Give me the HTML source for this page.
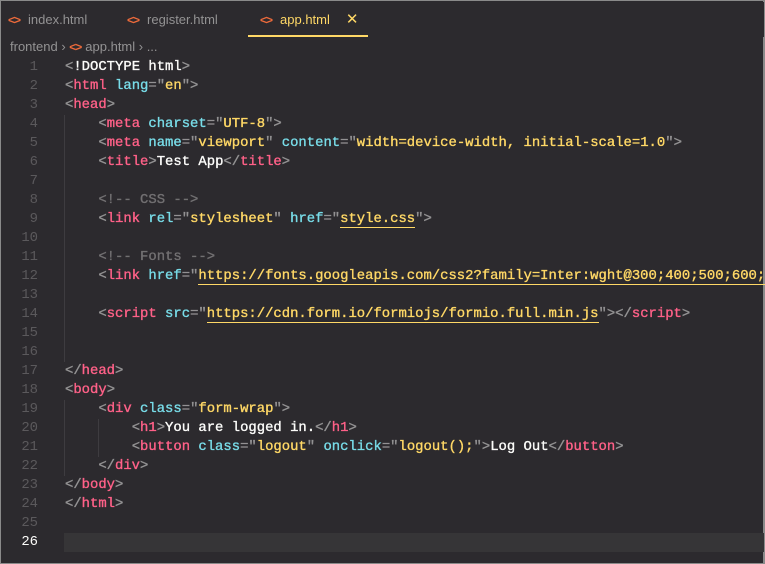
<!DOCTYPE html>
<html><head><style>
*{margin:0;padding:0;box-sizing:border-box}
body{width:765px;height:564px;overflow:hidden;background:#2c2a2e;font-family:"Liberation Sans",sans-serif;position:relative;border:1px solid #8a8a8a;border-right:2px solid #8a8a8a}
.tabs{position:absolute;left:1px;top:1px;width:762px;height:35px;background:#2c2a2e}
.tab{position:absolute;top:0;height:35px;line-height:35px;font-size:13px;color:#939293}
.ic{color:#ef6b3b;font-weight:bold;font-size:12px;margin-right:8px;letter-spacing:-1px}
.crumb{position:absolute;left:9px;top:38px;font-size:13px;color:#939293}
.code{position:absolute;left:0;top:57px;width:763px;font-family:"Liberation Mono",monospace;font-size:13.9px;-webkit-text-stroke:0.35px}
.ln{height:19px;line-height:19px;white-space:pre;position:relative}
.n{display:inline-block;width:37px;text-align:right;color:#5b595c;margin-right:27px;-webkit-text-stroke:0}
.p{color:#939293}.t{color:#ff6188}.a{color:#78dce8}.s{color:#ffd866}.w{color:#fcfcfa}.c{color:#727072}
.u{border-bottom:1px solid #ffd866}
.cur{background:#363537;position:absolute;left:63px;right:0;top:0;height:19px}
.g{position:absolute;width:1px;background:#3e3c40}
</style></head><body>
<div class="tabs">
<div class="tab" style="left:6px"><span class="ic">&lt;&gt;</span>index.html</div>
<div class="tab" style="left:125px"><span class="ic">&lt;&gt;</span>register.html</div>
<div class="tab" style="left:246px;width:120px;padding-left:12px;color:#ffd866;border-bottom:2px solid #ffd866"><span class="ic">&lt;&gt;</span>app.html<span style="margin-left:16px;color:#ffd866;font-size:15px">✕</span></div>
</div>
<div class="crumb">frontend › <span class="ic" style="margin-right:4px">&lt;&gt;</span>app.html › ...</div>
<div class="g" style="left:63px;top:114px;height:247px"></div>
<div class="g" style="left:63px;top:399px;height:76px"></div>
<div class="g" style="left:97px;top:418px;height:38px"></div>
<div class="code">
<div class="ln"><span class="n">1</span><span class="p">&lt;</span><span class="w">!DOCTYPE html</span><span class="p">&gt;</span></div>
<div class="ln"><span class="n">2</span><span class="p">&lt;</span><span class="t">html</span> <span class="a">lang</span><span class="p">="</span><span class="s">en</span><span class="p">"&gt;</span></div>
<div class="ln"><span class="n">3</span><span class="p">&lt;</span><span class="t">head</span><span class="p">&gt;</span></div>
<div class="ln"><span class="n">4</span>    <span class="p">&lt;</span><span class="t">meta</span> <span class="a">charset</span><span class="p">="</span><span class="s">UTF-8</span><span class="p">"&gt;</span></div>
<div class="ln"><span class="n">5</span>    <span class="p">&lt;</span><span class="t">meta</span> <span class="a">name</span><span class="p">="</span><span class="s">viewport</span><span class="p">"</span> <span class="a">content</span><span class="p">="</span><span class="s">width=device-width, initial-scale=1.0</span><span class="p">"&gt;</span></div>
<div class="ln"><span class="n">6</span>    <span class="p">&lt;</span><span class="t">title</span><span class="p">&gt;</span><span class="w">Test App</span><span class="p">&lt;/</span><span class="t">title</span><span class="p">&gt;</span></div>
<div class="ln"><span class="n">7</span></div>
<div class="ln"><span class="n">8</span>    <span class="c">&lt;!-- CSS --&gt;</span></div>
<div class="ln"><span class="n">9</span>    <span class="p">&lt;</span><span class="t">link</span> <span class="a">rel</span><span class="p">="</span><span class="s">stylesheet</span><span class="p">"</span> <span class="a">href</span><span class="p">="</span><span class="s u">style.css</span><span class="p">"&gt;</span></div>
<div class="ln"><span class="n">10</span></div>
<div class="ln"><span class="n">11</span>    <span class="c">&lt;!-- Fonts --&gt;</span></div>
<div class="ln"><span class="n">12</span>    <span class="p">&lt;</span><span class="t">link</span> <span class="a">href</span><span class="p">="</span><span class="s u">https://fonts.googleapis.com/css2?family=Inter:wght@300;400;500;600;700</span></div>
<div class="ln"><span class="n">13</span></div>
<div class="ln"><span class="n">14</span>    <span class="p">&lt;</span><span class="t">script</span> <span class="a">src</span><span class="p">="</span><span class="s u">https://cdn.form.io/formiojs/formio.full.min.js</span><span class="p">"&gt;&lt;/</span><span class="t">script</span><span class="p">&gt;</span></div>
<div class="ln"><span class="n">15</span></div>
<div class="ln"><span class="n">16</span></div>
<div class="ln"><span class="n">17</span><span class="p">&lt;/</span><span class="t">head</span><span class="p">&gt;</span></div>
<div class="ln"><span class="n">18</span><span class="p">&lt;</span><span class="t">body</span><span class="p">&gt;</span></div>
<div class="ln"><span class="n">19</span>    <span class="p">&lt;</span><span class="t">div</span> <span class="a">class</span><span class="p">="</span><span class="s">form-wrap</span><span class="p">"&gt;</span></div>
<div class="ln"><span class="n">20</span>        <span class="p">&lt;</span><span class="t">h1</span><span class="p">&gt;</span><span class="w">You are logged in.</span><span class="p">&lt;/</span><span class="t">h1</span><span class="p">&gt;</span></div>
<div class="ln"><span class="n">21</span>        <span class="p">&lt;</span><span class="t">button</span> <span class="a">class</span><span class="p">="</span><span class="s">logout</span><span class="p">"</span> <span class="a">onclick</span><span class="p">="</span><span class="s">logout();</span><span class="p">"&gt;</span><span class="w">Log Out</span><span class="p">&lt;/</span><span class="t">button</span><span class="p">&gt;</span></div>
<div class="ln"><span class="n">22</span>    <span class="p">&lt;/</span><span class="t">div</span><span class="p">&gt;</span></div>
<div class="ln"><span class="n">23</span><span class="p">&lt;/</span><span class="t">body</span><span class="p">&gt;</span></div>
<div class="ln"><span class="n">24</span><span class="p">&lt;/</span><span class="t">html</span><span class="p">&gt;</span></div>
<div class="ln"><span class="n">25</span></div>
<div class="ln"><div class="cur"></div><span class="n" style="color:#fcfcfa;position:relative">26</span></div>
</div>
</body></html>
